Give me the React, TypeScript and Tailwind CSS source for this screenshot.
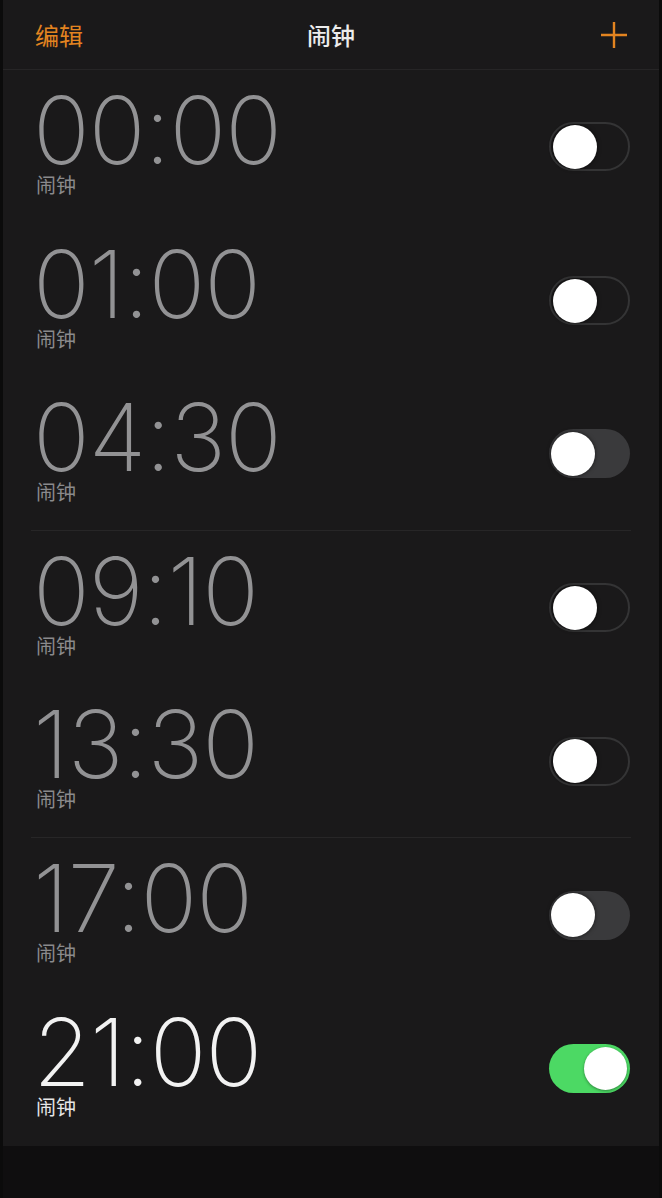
const alarms = [
  { time: "00:00", on: false, filled: false, divider: false },
  { time: "01:00", on: false, filled: false, divider: false },
  { time: "04:30", on: false, filled: true, divider: true },
  { time: "09:10", on: false, filled: false, divider: false },
  { time: "13:30", on: false, filled: false, divider: true },
  { time: "17:00", on: false, filled: true, divider: false },
  { time: "21:00", on: true, filled: false, divider: false },
];

const cjk = { fontFamily: '"Noto Sans CJK SC", "Noto Sans", sans-serif' };
const digits = { fontFamily: 'Inter, "Noto Sans", sans-serif' };

function Toggle({ on, filled }: { on: boolean; filled: boolean }) {
  if (on) {
    return (
      <div className="w-[81px] h-[49px] rounded-full bg-[#4cd964] flex items-center justify-end px-[3px]">
        <div className="w-[43px] h-[43px] rounded-full bg-white shadow-[0_1px_3px_rgba(0,0,0,0.4)]" />
      </div>
    );
  }
  return (
    <div
      className={`w-[81px] h-[49px] rounded-full flex items-center px-[2px] ${
        filled ? "bg-[#3a3a3c]" : "border-2 border-[#343435] bg-transparent"
      }`}
    >
      <div className="w-[44px] h-[44px] rounded-full bg-white shadow-[0_0_4px_rgba(0,0,0,0.6)]" />
    </div>
  );
}

export default function App() {
  return (
    <div className="w-[662px] h-[1198px] bg-[#1a191a] border-l-[3px] border-r-[3px] border-[#0b0b0b] flex flex-col overflow-hidden">
      <header className="h-[70px] shrink-0 border-b border-[#262526] flex items-center justify-between pl-[32px] pr-[30px] relative">
        <span className="text-[24px] text-[#e38420]" style={cjk}>
          编辑
        </span>
        <span
          className="absolute left-1/2 -translate-x-1/2 text-[24px] text-[#ececec] font-medium"
          style={cjk}
        >
          闹钟
        </span>
        <svg width="30" height="30" viewBox="0 0 30 30">
          <path d="M15 2V28M2 15H28" stroke="#e38420" strokeWidth="2.4" />
        </svg>
      </header>
      {alarms.map((a) => (
        <div key={a.time} className="shrink-0 flex flex-col">
          <div
            className={`${
              a.divider ? "h-[152.7px]" : "h-[153.7px]"
            } flex items-center justify-between pl-[30px] pr-[29px]`}
          >
            <div className="flex flex-col pb-[10px]">
              <span
                className={`text-[94px] leading-[86px] font-extralight tracking-[-1px] ${
                  a.on ? "text-[#f2f2f2]" : "text-[#929294]"
                }`}
                style={digits}
              >
                {a.time}
              </span>
              <span
                className={`text-[20px] leading-[24px] pl-[3px] ${
                  a.on ? "text-[#e6e6e6]" : "text-[#8a8a8c]"
                }`}
                style={cjk}
              >
                闹钟
              </span>
            </div>
            <Toggle on={a.on} filled={a.filled} />
          </div>
          {a.divider && <div className="h-px mx-[28px] bg-[#272627]" />}
        </div>
      ))}
      <div className="flex-1 bg-[#0f0e0f]" />
    </div>
  );
}
